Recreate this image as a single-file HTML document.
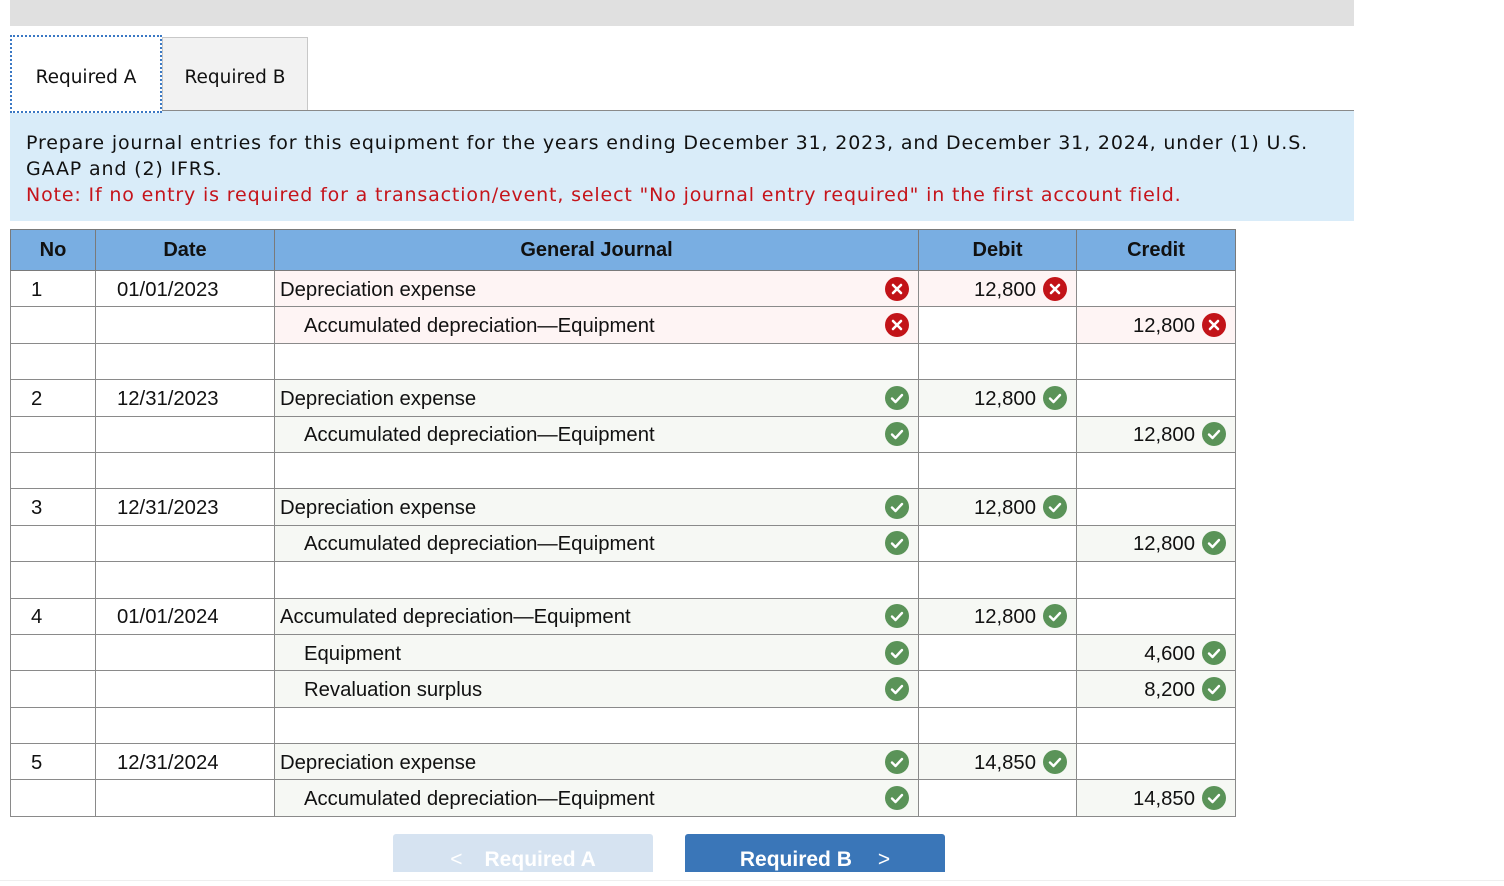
<!DOCTYPE html><html><head><meta charset="utf-8"><style>
body{margin:0;width:1504px;height:886px;background:#fff;position:relative;overflow:hidden;font-family:"Liberation Sans",Arial,sans-serif;}
.top{position:absolute;left:10px;top:0;width:1344px;height:26px;background:#e0e0e0}
.tab{position:absolute;top:37px;height:74px;font-family:"DejaVu Sans",Verdana,sans-serif;font-size:18.5px;color:#111;display:flex;align-items:center;justify-content:center;box-sizing:border-box;padding-top:6px}
.ta{left:10px;width:152px;border:2px dotted #3a78c4;background:#fff;top:35px;height:78px;z-index:2}
.tb{left:162px;width:146px;border:1px solid #c8c8c8;border-bottom:none;background:#f2f2f2}
.line{position:absolute;left:10px;top:110px;width:1344px;height:1px;background:#8a8a8a}
.info{position:absolute;left:10px;top:111px;width:1344px;height:110px;background:#d9ecf9;font-family:"DejaVu Sans",Verdana,sans-serif;font-size:19px;letter-spacing:0.85px;line-height:26px;color:#111;padding:19px 16px 0;box-sizing:border-box}
.info .r{color:#c5141b}
table{position:absolute;left:10px;top:229px;border-collapse:collapse;width:1225px;table-layout:fixed;font-size:20.3px;color:#111}
th{background:#79aee2;height:41px;border:1px solid #7a7a7a;font-weight:bold;font-size:20px;box-sizing:border-box;padding-top:2px}
td{border:1px solid #8a8a8a;height:36.4px;padding:3px 6px 0;box-sizing:border-box;white-space:nowrap;position:relative}
td.n{padding-left:20px}td.d{padding-left:21px}
td.g{padding-right:40px;padding-left:5px}td.in{padding-left:29px}
td.num{text-align:right;padding-right:40px}
.e{background:#fef4f4}.c{background:#f6f8f4}
.ic{position:absolute;right:9px;top:50%;margin-top:-12px;width:24px;height:24px;border-radius:50%}
.x{background:#c21318}.ok{background:#5a9358}
.ic svg{position:absolute;left:0;top:0}
.btn{position:absolute;top:834px;height:38px;width:260px;font-weight:bold;font-size:21px;color:#fff;display:flex;align-items:center;justify-content:center;border-radius:3px 3px 0 0;box-sizing:border-box;padding-top:14px;overflow:hidden}
.b1{left:393px;background:#d6e3f1}.b2{left:685px;background:#3a76b8}
.foot{position:absolute;left:0;top:880px;width:1504px;height:1px;background:#eee}
</style></head><body>
<div class="top"></div>
<div class="tab tb">Required B</div>
<div class="tab ta">Required A</div>
<div class="line"></div>
<div class="info">Prepare journal entries for this equipment for the years ending December 31, 2023, and December 31, 2024, under (1) U.S. GAAP and (2) IFRS.<br><span class="r">Note: If no entry is required for a transaction/event, select "No journal entry required" in the first account field.</span></div>
<table>
<colgroup><col style="width:85px"><col style="width:179px"><col style="width:644px"><col style="width:158px"><col style="width:159px"></colgroup>
<tr><th>No</th><th>Date</th><th>General Journal</th><th>Debit</th><th>Credit</th></tr>
<tr><td class="n">1</td><td class="d">01/01/2023</td><td class="g e">Depreciation expense<span class="ic x"><svg width="24" height="24"><path d="M8 8L16 16M16 8L8 16" stroke="#fff" stroke-width="2.6" stroke-linecap="round"/></svg></span></td><td class="num e">12,800<span class="ic x"><svg width="24" height="24"><path d="M8 8L16 16M16 8L8 16" stroke="#fff" stroke-width="2.6" stroke-linecap="round"/></svg></span></td><td></td></tr>
<tr><td></td><td></td><td class="g e in">Accumulated depreciation—Equipment<span class="ic x"><svg width="24" height="24"><path d="M8 8L16 16M16 8L8 16" stroke="#fff" stroke-width="2.6" stroke-linecap="round"/></svg></span></td><td></td><td class="num e">12,800<span class="ic x"><svg width="24" height="24"><path d="M8 8L16 16M16 8L8 16" stroke="#fff" stroke-width="2.6" stroke-linecap="round"/></svg></span></td></tr>
<tr><td></td><td></td><td></td><td></td><td></td></tr>
<tr><td class="n">2</td><td class="d">12/31/2023</td><td class="g c">Depreciation expense<span class="ic ok"><svg width="24" height="24"><path d="M7 12.5L10.5 16L17 9" fill="none" stroke="#fff" stroke-width="2.4" stroke-linecap="round" stroke-linejoin="round"/></svg></span></td><td class="num c">12,800<span class="ic ok"><svg width="24" height="24"><path d="M7 12.5L10.5 16L17 9" fill="none" stroke="#fff" stroke-width="2.4" stroke-linecap="round" stroke-linejoin="round"/></svg></span></td><td></td></tr>
<tr><td></td><td></td><td class="g c in">Accumulated depreciation—Equipment<span class="ic ok"><svg width="24" height="24"><path d="M7 12.5L10.5 16L17 9" fill="none" stroke="#fff" stroke-width="2.4" stroke-linecap="round" stroke-linejoin="round"/></svg></span></td><td></td><td class="num c">12,800<span class="ic ok"><svg width="24" height="24"><path d="M7 12.5L10.5 16L17 9" fill="none" stroke="#fff" stroke-width="2.4" stroke-linecap="round" stroke-linejoin="round"/></svg></span></td></tr>
<tr><td></td><td></td><td></td><td></td><td></td></tr>
<tr><td class="n">3</td><td class="d">12/31/2023</td><td class="g c">Depreciation expense<span class="ic ok"><svg width="24" height="24"><path d="M7 12.5L10.5 16L17 9" fill="none" stroke="#fff" stroke-width="2.4" stroke-linecap="round" stroke-linejoin="round"/></svg></span></td><td class="num c">12,800<span class="ic ok"><svg width="24" height="24"><path d="M7 12.5L10.5 16L17 9" fill="none" stroke="#fff" stroke-width="2.4" stroke-linecap="round" stroke-linejoin="round"/></svg></span></td><td></td></tr>
<tr><td></td><td></td><td class="g c in">Accumulated depreciation—Equipment<span class="ic ok"><svg width="24" height="24"><path d="M7 12.5L10.5 16L17 9" fill="none" stroke="#fff" stroke-width="2.4" stroke-linecap="round" stroke-linejoin="round"/></svg></span></td><td></td><td class="num c">12,800<span class="ic ok"><svg width="24" height="24"><path d="M7 12.5L10.5 16L17 9" fill="none" stroke="#fff" stroke-width="2.4" stroke-linecap="round" stroke-linejoin="round"/></svg></span></td></tr>
<tr><td></td><td></td><td></td><td></td><td></td></tr>
<tr><td class="n">4</td><td class="d">01/01/2024</td><td class="g c">Accumulated depreciation—Equipment<span class="ic ok"><svg width="24" height="24"><path d="M7 12.5L10.5 16L17 9" fill="none" stroke="#fff" stroke-width="2.4" stroke-linecap="round" stroke-linejoin="round"/></svg></span></td><td class="num c">12,800<span class="ic ok"><svg width="24" height="24"><path d="M7 12.5L10.5 16L17 9" fill="none" stroke="#fff" stroke-width="2.4" stroke-linecap="round" stroke-linejoin="round"/></svg></span></td><td></td></tr>
<tr><td></td><td></td><td class="g c in">Equipment<span class="ic ok"><svg width="24" height="24"><path d="M7 12.5L10.5 16L17 9" fill="none" stroke="#fff" stroke-width="2.4" stroke-linecap="round" stroke-linejoin="round"/></svg></span></td><td></td><td class="num c">4,600<span class="ic ok"><svg width="24" height="24"><path d="M7 12.5L10.5 16L17 9" fill="none" stroke="#fff" stroke-width="2.4" stroke-linecap="round" stroke-linejoin="round"/></svg></span></td></tr>
<tr><td></td><td></td><td class="g c in">Revaluation surplus<span class="ic ok"><svg width="24" height="24"><path d="M7 12.5L10.5 16L17 9" fill="none" stroke="#fff" stroke-width="2.4" stroke-linecap="round" stroke-linejoin="round"/></svg></span></td><td></td><td class="num c">8,200<span class="ic ok"><svg width="24" height="24"><path d="M7 12.5L10.5 16L17 9" fill="none" stroke="#fff" stroke-width="2.4" stroke-linecap="round" stroke-linejoin="round"/></svg></span></td></tr>
<tr><td></td><td></td><td></td><td></td><td></td></tr>
<tr><td class="n">5</td><td class="d">12/31/2024</td><td class="g c">Depreciation expense<span class="ic ok"><svg width="24" height="24"><path d="M7 12.5L10.5 16L17 9" fill="none" stroke="#fff" stroke-width="2.4" stroke-linecap="round" stroke-linejoin="round"/></svg></span></td><td class="num c">14,850<span class="ic ok"><svg width="24" height="24"><path d="M7 12.5L10.5 16L17 9" fill="none" stroke="#fff" stroke-width="2.4" stroke-linecap="round" stroke-linejoin="round"/></svg></span></td><td></td></tr>
<tr><td></td><td></td><td class="g c in">Accumulated depreciation—Equipment<span class="ic ok"><svg width="24" height="24"><path d="M7 12.5L10.5 16L17 9" fill="none" stroke="#fff" stroke-width="2.4" stroke-linecap="round" stroke-linejoin="round"/></svg></span></td><td></td><td class="num c">14,850<span class="ic ok"><svg width="24" height="24"><path d="M7 12.5L10.5 16L17 9" fill="none" stroke="#fff" stroke-width="2.4" stroke-linecap="round" stroke-linejoin="round"/></svg></span></td></tr>
</table>
<div class="btn b1"><span style="font-weight:normal;margin-right:22px">&lt;</span>Required A</div>
<div class="btn b2">Required B<span style="font-weight:normal;margin-left:26px">&gt;</span></div>
<div class="foot"></div>
</body></html>
